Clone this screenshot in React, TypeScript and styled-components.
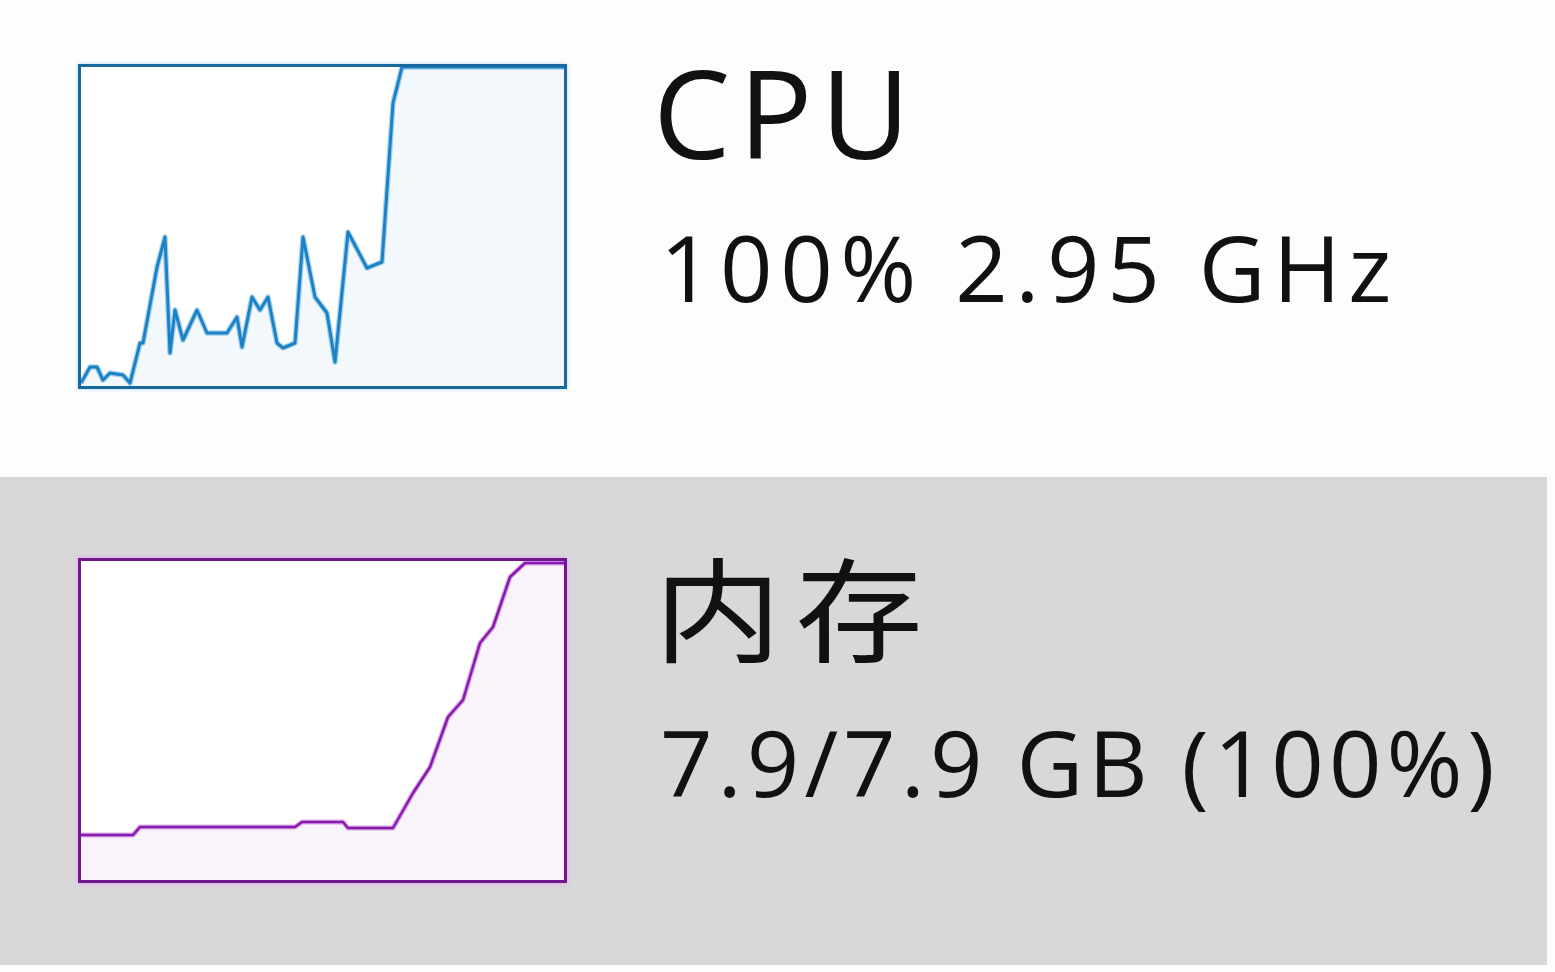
import * as React from "react";
import styled, { createGlobalStyle } from "styled-components";

const GlobalStyle = createGlobalStyle`
    html, body {
        margin: 0;
        padding: 0;
        background: #fdfdfd;
        overflow: hidden;
    }
`;

const Page = styled.div`
    width: 1555px;
    height: 972px;
    display: flex;
    flex-direction: column;
    background: #fdfdfd;
    font-family: "Open Sans", "Noto Sans CJK SC", sans-serif;
    color: #111;
`;

const Row = styled.div<{ $selected?: boolean; $height: number; $top: number }>`
    display: flex;
    align-items: flex-start;
    gap: 93px;
    width: 1547px;
    height: ${(p) => p.$height}px;
    box-sizing: border-box;
    padding: ${(p) => p.$top}px 0 0 78px;
    background: ${(p) => (p.$selected ? "#d9d7da" : "transparent")};
`;

const Chart = styled.div<{ $color: string; $glow: string }>`
    width: 489px;
    height: 325px;
    box-sizing: border-box;
    border: 3px solid ${(p) => p.$color};
    box-shadow: 0 0 4px ${(p) => p.$glow};
    background: #fff;
    flex: none;

    svg {
        display: block;
    }
`;

const Info = styled.div`
    display: flex;
    flex-direction: column;
`;

const Title = styled.div`
    font-size: 123px;
    line-height: 1;
    margin: -14px 0 0 -7px;
    letter-spacing: 8px;
`;

const Value = styled.div<{ $tracking: number }>`
    font-size: 92px;
    line-height: 1;
    margin-top: 48px;
    letter-spacing: ${(p) => p.$tracking}px;
    white-space: nowrap;
`;

const CnTitle = styled(Title)`
    font-family: "Noto Sans CJK SC", sans-serif;
    font-size: 113px;
    margin: -10px 0 7px -6px;
    letter-spacing: 12px;
    transform: scaleX(1.13);
    transform-origin: left center;
`;

type Pt = [number, number];

const cpuPoints: Pt[] = [
    [0, 316], [9, 300], [16, 300], [22, 313], [29, 306], [42, 308], [49, 316],
    [59, 276], [62, 276], [76, 200], [84, 170], [89, 286], [94, 243], [102, 273],
    [116, 243], [126, 266], [146, 266], [156, 250], [161, 280], [171, 230],
    [179, 243], [187, 230], [196, 276], [202, 281], [214, 276], [222, 170],
    [234, 230], [246, 246], [254, 295], [267, 165], [286, 201], [301, 195],
    [312, 36], [321, 0], [483, 0],
];

const memPoints: Pt[] = [
    [0, 274], [52, 274], [59, 266], [214, 266], [221, 261], [262, 261],
    [267, 267], [312, 267], [332, 232], [349, 206], [367, 156], [382, 139],
    [399, 82], [412, 66], [429, 16], [444, 2], [483, 2],
];

const Graph: React.FC<{ points: Pt[]; color: string; width: number; fill: number }> = ({
    points,
    color,
    width,
    fill,
}) => {
    const line = points.map(([x, y]) => `${x},${y}`).join(" ");
    const area = `0,319 ${line} 483,319`;
    return (
        <svg width={483} height={319} viewBox="0 0 483 319">
            <polygon points={area} fill={color} fillOpacity={fill} />
            <polyline
                points={line}
                fill="none"
                stroke={color}
                strokeOpacity={0.35}
                strokeWidth={width + 2.5}
                strokeLinejoin="round"
            />
            <polyline
                points={line}
                fill="none"
                stroke={color}
                strokeWidth={width}
                strokeLinejoin="round"
            />
        </svg>
    );
};

export default function App() {
    return (
        <Page>
            <GlobalStyle />
            <Row $height={477} $top={64}>
                <Chart $color="#19699f" $glow="rgba(80,170,230,0.45)">
                    <Graph points={cpuPoints} color="#1a82c6" width={3} fill={0.06} />
                </Chart>
                <Info>
                    <Title>CPU</Title>
                    <Value $tracking={7.5}>100% 2.95 GHz</Value>
                </Info>
            </Row>
            <Row $selected $height={488} $top={81}>
                <Chart $color="#6e1790" $glow="rgba(230,130,250,0.6)">
                    <Graph points={memPoints} color="#8a17b0" width={2.5} fill={0.05} />
                </Chart>
                <Info>
                    <CnTitle>内存</CnTitle>
                    <Value $tracking={5}>7.9/7.9 GB (100%)</Value>
                </Info>
            </Row>
        </Page>
    );
}
